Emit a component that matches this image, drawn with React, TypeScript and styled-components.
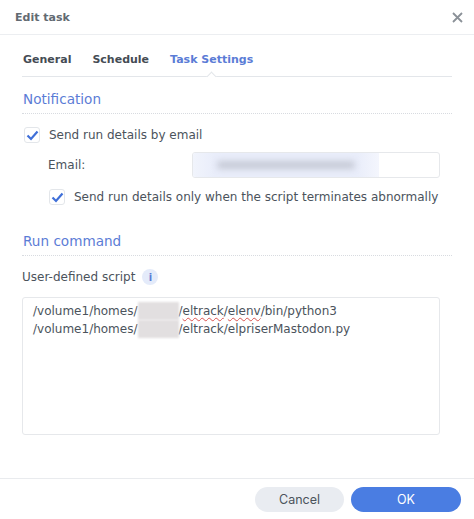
import styled, { createGlobalStyle } from "styled-components";

const GlobalStyle = createGlobalStyle`
  html, body {
    margin: 0;
    padding: 0;
    background: #fff;
  }
  body {
    font-family: "DejaVu Sans", Verdana, sans-serif;
    font-size: 12px;
    color: #4b535c;
  }
`;

const Dialog = styled.div`
  width: 474px;
  height: 519px;
  display: flex;
  flex-direction: column;
  background: #fff;
  overflow: hidden;
`;

const Header = styled.header`
  height: 35px;
  box-sizing: border-box;
  flex: none;
  display: flex;
  align-items: center;
  justify-content: space-between;
  padding: 0 11px 0 15px;
  border-bottom: 1px solid #eceef1;
`;

const Title = styled.div`
  font-size: 11px;
  font-weight: 700;
  color: #626a72;
`;

const CloseIcon = styled.svg`
  width: 11px;
  height: 11px;
  stroke: #8b9198;
  stroke-width: 1.8;
  fill: none;
`;

const Body = styled.main`
  flex: 1;
  padding: 0 22px;
`;

const Tabs = styled.nav`
  height: 42px;
  display: flex;
  align-items: center;
  gap: 21px;
  padding: 8px 0 0 1px;
  box-sizing: border-box;
  border-bottom: 1px solid #e3e6ea;
  position: relative;
`;

const Tab = styled.div<{ $active?: boolean }>`
  font-size: 11px;
  font-weight: 700;
  color: ${(props) => (props.$active ? "#5b7cd6" : "#454c54")};
`;

const TabCaret = styled.span`
  position: absolute;
  left: 186px;
  bottom: -4px;
  width: 6px;
  height: 6px;
  background: #fff;
  border-top: 1px solid #e3e6ea;
  border-left: 1px solid #e3e6ea;
  transform: rotate(45deg);
`;

const SectionTitle = styled.div<{ $top: number }>`
  height: 22px;
  margin-top: ${(props) => props.$top}px;
  font-size: 13.6px;
  line-height: 22px;
  color: #5b7cd6;
  border-bottom: 1px dotted #d8dbe0;
  padding: 0 0 3px 1px;
`;

const CheckRow = styled.label<{ $indent: number; $top: number }>`
  display: flex;
  align-items: center;
  gap: 9px;
  height: 18px;
  margin-top: ${(props) => props.$top}px;
  margin-left: ${(props) => props.$indent}px;
  white-space: nowrap;
`;

const CheckBox = styled.span`
  width: 16px;
  height: 16px;
  box-sizing: border-box;
  flex: none;
  display: flex;
  align-items: center;
  justify-content: center;
  border: 1px solid #e3e6ea;
  border-radius: 3px;
  background: #fff;
`;

const CheckMark = styled.svg`
  width: 13px;
  height: 11px;
  stroke: #3f6fd8;
  stroke-width: 2.2;
  fill: none;
`;

const EmailRow = styled.div`
  display: flex;
  align-items: center;
  height: 26px;
  margin-top: 8px;
  padding-left: 26px;
`;

const EmailLabel = styled.div`
  width: 144px;
`;

const EmailInput = styled.div`
  width: 248px;
  height: 26px;
  box-sizing: border-box;
  border: 1px solid #e6e8eb;
  border-radius: 3px;
  overflow: hidden;
`;

const EmailBlur = styled.div`
  width: 186px;
  height: 100%;
  background: linear-gradient(90deg, #f1f4fc 0%, #e9edfa 12%, #e9edfa 88%, #f4f6fd 100%);
  display: flex;
  align-items: center;
  justify-content: center;
`;

const EmailSmudge = styled.div`
  width: 138px;
  height: 8px;
  border-radius: 4px;
  background: #c6cad6;
  filter: blur(3px);
`;

const FieldLabel = styled.div`
  display: flex;
  align-items: center;
  gap: 7px;
  height: 18px;
  margin-top: 12px;
`;

const InfoBadge = styled.span`
  width: 16px;
  height: 16px;
  border-radius: 50%;
  background: #e4ebfa;
  color: #5b7cd6;
  font-size: 10px;
  font-weight: 700;
  display: flex;
  align-items: center;
  justify-content: center;
`;

const ScriptBox = styled.div`
  width: 418px;
  height: 138px;
  margin-top: 11px;
  box-sizing: border-box;
  border: 1px solid #e6e8eb;
  border-radius: 3px;
  padding: 4px 10px;
  line-height: 18px;
  color: #4b535c;
`;

const ScriptLine = styled.div`
  white-space: nowrap;
  height: 18px;
`;

const Redacted = styled.span`
  display: inline-block;
  width: 41px;
  height: 18px;
  vertical-align: top;
  background: #e2dfe0;
  filter: blur(1px);
`;

const Misspelled = styled.span`
  text-decoration: underline wavy #d9534f 1px;
  text-underline-offset: 2px;
`;

const Footer = styled.footer`
  height: 41px;
  box-sizing: border-box;
  flex: none;
  display: flex;
  justify-content: flex-end;
  align-items: flex-start;
  gap: 7px;
  padding: 8px 13px 0 0;
  border-top: 1px solid #e9ebee;
`;

const Button = styled.button<{ $primary?: boolean }>`
  width: ${(props) => (props.$primary ? 110 : 89)}px;
  height: 25px;
  border: none;
  border-radius: 13px;
  padding: 0;
  font-family: Inter, "Noto Sans", sans-serif;
  font-size: 12.5px;
  background: ${(props) => (props.$primary ? "#4a7de2" : "#e9ecf1")};
  color: ${(props) => (props.$primary ? "#fff" : "#4b535c")};
`;

const Check = () => (
  <CheckBox>
    <CheckMark viewBox="0 0 13 11">
      <path d="M1.5 5.5 L5 9 L11.5 1.5" />
    </CheckMark>
  </CheckBox>
);

export default function App() {
  return (
    <>
      <GlobalStyle />
      <Dialog>
        <Header>
          <Title>Edit task</Title>
          <CloseIcon viewBox="0 0 11 11">
            <path d="M1 1 L10 10 M10 1 L1 10" />
          </CloseIcon>
        </Header>
        <Body>
          <Tabs>
            <Tab>General</Tab>
            <Tab>Schedule</Tab>
            <Tab $active>Task Settings</Tab>
            <TabCaret />
          </Tabs>
          <SectionTitle $top={11}>Notification</SectionTitle>
          <CheckRow $indent={2} $top={12}>
            <Check />
            Send run details by email
          </CheckRow>
          <EmailRow>
            <EmailLabel>Email:</EmailLabel>
            <EmailInput>
              <EmailBlur>
                <EmailSmudge />
              </EmailBlur>
            </EmailInput>
          </EmailRow>
          <CheckRow $indent={27} $top={10}>
            <Check />
            Send run details only when the script terminates abnormally
          </CheckRow>
          <SectionTitle $top={24}>Run command</SectionTitle>
          <FieldLabel>
            User-defined script
            <InfoBadge>i</InfoBadge>
          </FieldLabel>
          <ScriptBox>
            <ScriptLine>
              /volume1/homes/<Redacted />/<Misspelled>eltrack</Misspelled>/<Misspelled>elenv</Misspelled>/bin/python3
            </ScriptLine>
            <ScriptLine>
              /volume1/homes/<Redacted />/eltrack/elpriserMastodon.py
            </ScriptLine>
          </ScriptBox>
        </Body>
        <Footer>
          <Button>Cancel</Button>
          <Button $primary>OK</Button>
        </Footer>
      </Dialog>
    </>
  );
}
